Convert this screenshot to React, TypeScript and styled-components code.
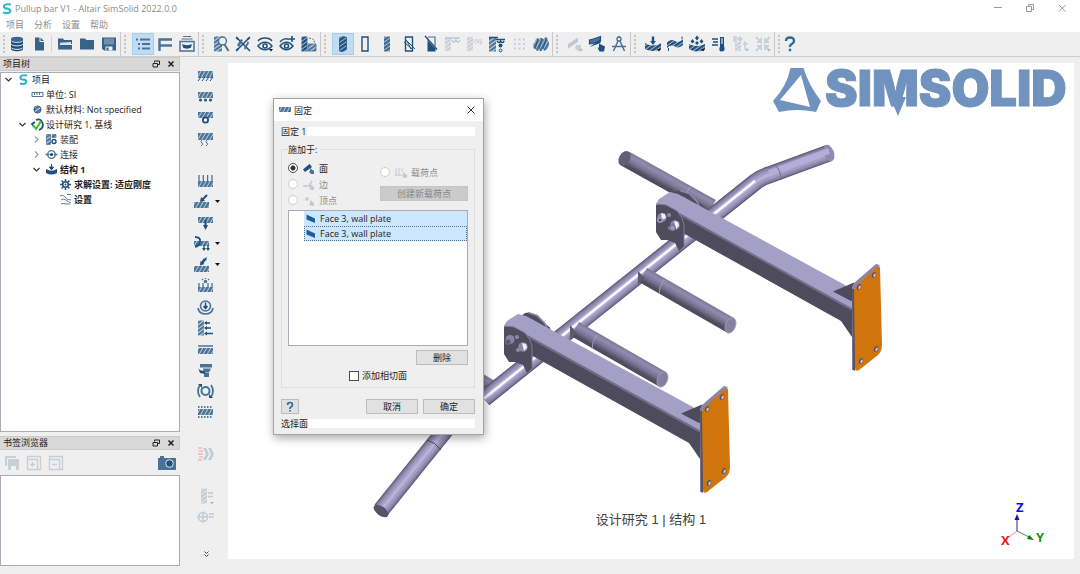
import React from "react";
import styled, { createGlobalStyle, css } from "styled-components";

const navy = "#1f4f7d";
const steel = "#4a7297";
const chrome = "#efefef";

const Global = createGlobalStyle`
  * { box-sizing: border-box; }
  body {
    margin: 0;
    background: ${chrome};
    color: #1c1c1c;
    font: 9px/15px "Open Sans", "Noto Sans CJK SC", sans-serif;
  }
  button, input, ul { font: inherit; color: inherit; margin: 0; padding: 0; }
  svg { display: block; flex: none; }
`;

const Page = styled.div`
  display: flex;
  flex-direction: column;
  min-height: 100vh;
`;

const TitleBar = styled.header`
  display: flex;
  align-items: center;
  gap: 3px;
  height: 16px;
  padding: 0 12px 0 2px;
  background: #fff;
  color: #8c8c8c;
`;

const TitleText = styled.h1`
  flex: 1;
  margin: 0;
  font-size: 9px;
  font-weight: 400;
`;

const WindowButtons = styled.div`
  display: flex;
  gap: 20px;
`;

const BareButton = styled.button`
  display: grid;
  place-items: center;
  border: 0;
  background: none;
`;

const WindowButton = styled(BareButton)`
  width: 12px;
  height: 12px;
`;

const MenuBar = styled.nav`
  display: flex;
  gap: 10px;
  height: 16px;
  padding-left: 6px;
  background: #fff;
  color: #8c8c8c;
`;

const MenuItem = styled(BareButton)`
  height: 16px;
`;

const ToolBar = styled.div`
  display: flex;
  height: 25px;
  background: ${chrome};
  border-bottom: 1px solid #cdcdcd;
`;

const ToolGroup = styled.div<{ $tight?: boolean; $last?: boolean }>`
  display: flex;
  align-items: center;
  position: relative;
  padding-left: ${(p) => (p.$last ? 4 : p.$tight ? 6 : 11)}px;
  ${(p) => !p.$last && "border-right: 1px solid #c9c9c9;"}
  &::before {
    content: "";
    position: absolute;
    left: 3px;
    top: 3px;
    bottom: 3px;
    border-left: 2px dotted #c4c4c4;
  }
`;

const ToolButton = styled(BareButton)<{ $on?: boolean; $off?: boolean }>`
  width: 22px;
  height: 22px;
  ${(p) => p.$on && css`background: #bedcf3; box-shadow: inset 0 0 0 1px #a5cdec;`}
  svg { opacity: ${(p) => (p.$off ? 0.24 : 1)}; }
`;

const Divider = styled.span`
  width: 1px;
  height: 16px;
  margin: 0 2px 0 1px;
  background: #d2d2d2;
`;

const Body = styled.div`
  display: flex;
  flex: 1;
`;

const Dock = styled.aside`
  display: flex;
  flex-direction: column;
  width: 180px;
  padding-bottom: 8px;
`;

const DockHeader = styled.div`
  display: flex;
  align-items: center;
  gap: 4px;
  height: 14px;
  margin-bottom: 1px;
  padding: 0 3px;
  background: #d8d8d8;
  border: 1px solid #cbcbcb;
  border-left: 0;
`;

const DockTitle = styled.h2`
  flex: 1;
  margin: 0;
  font-size: 9px;
  font-weight: 400;
  line-height: 12px;
`;

const DockButton = styled(BareButton)`
  width: 11px;
  height: 12px;
`;

const Tree = styled.ul`
  flex: 1;
  margin: 0 0 4px;
  list-style: none;
  background: #fff;
  border: 1px solid #a9abb5;
  border-top-width: 0;
  box-shadow: inset 0 1px #a9abb5;
`;

const TreeRow = styled.li<{ $depth: number; $bold?: boolean }>`
  display: flex;
  align-items: center;
  height: 15px;
  padding-left: ${(p) => 2 + p.$depth * 14}px;
  font-weight: ${(p) => (p.$bold ? 700 : 400)};
  white-space: nowrap;
`;

const Twisty = styled.span`
  display: grid;
  place-items: center;
  width: 11px;
`;

const TreeIcon = styled.span`
  display: grid;
  place-items: center;
  width: 18px;
`;

const BookmarkTools = styled.div`
  display: flex;
  align-items: center;
  height: 24px;
  padding: 0 2px 0 1px;
`;

const Spacer = styled.span`
  flex: 1;
`;

const BookmarkList = styled.div`
  height: 91px;
  background: #fff;
  border: 1px solid #a9abb5;
`;

const SideBar = styled.div`
  display: flex;
  flex-direction: column;
  width: 48px;
  padding-top: 8px;
`;

const SideGroup = styled.div`
  display: flex;
  flex-direction: column;
  margin-bottom: 21px;
`;

const SideButton = styled(BareButton)<{ $off?: boolean; $menu?: boolean }>`
  display: flex;
  align-items: center;
  gap: 4px;
  height: 21px;
  padding-left: ${(p) => (p.$menu ? 13 : 16)}px;
  svg { opacity: ${(p) => (p.$off ? 0.28 : 1)}; }
`;

const MoreButton = styled(BareButton)`
  width: 52px;
  height: 12px;
`;

const Viewport = styled.main`
  position: relative;
  flex: 1;
  display: flex;
  min-width: 0;
  margin: 6px 6px 15px 0;
  background: #fff;
`;

const Scene = styled.svg`
  width: 100%;
  height: auto;
  flex: 1;
`;

const Brand = styled.svg`
  position: absolute;
  top: -6px;
  right: 3px;
`;

const Caption = styled.p`
  position: absolute;
  left: 0;
  right: 0;
  bottom: 30px;
  margin: 0;
  text-align: center;
  font: 13px/18px "Liberation Sans", "Noto Sans CJK SC", sans-serif;
  color: #404040;
`;

const Triad = styled.svg`
  position: absolute;
  right: 24px;
  bottom: 8px;
`;

const Dialog = styled.section`
  position: absolute;
  left: 45px;
  top: 35px;
  width: 211px;
  padding-bottom: 6px;
  background: ${chrome};
  border: 1px solid #a3a3a3;
  box-shadow: 1px 3px 9px rgba(0, 0, 0, 0.35);
`;

const DialogHead = styled.div`
  display: flex;
  align-items: center;
  gap: 3px;
  height: 22px;
  padding: 0 6px 0 5px;
  background: #fff;
`;

const DialogTitle = styled.h2`
  flex: 1;
  margin: 0;
  font-size: 9px;
  font-weight: 400;
`;

const DialogBody = styled.form`
  display: flex;
  flex-direction: column;
  padding: 6px 8px 0 7px;
`;

const LineInput = styled.input`
  width: 100%;
  height: 9px;
  border: 0;
  outline: 0;
  background: linear-gradient(to right, ${chrome} 26px, #fff 26px);
`;

const Fieldset = styled.fieldset`
  min-width: 0;
  margin: 6px 0 0;
  padding: 3px 6px 4px;
  border: 1px solid #dedede;
`;

const Legend = styled.legend`
  padding: 0 3px 0 0;
  line-height: 15px;
`;

const Choices = styled.div`
  display: flex;
  justify-content: space-between;
  margin-bottom: 2px;
`;

const ChoiceColumn = styled.div<{ $right?: boolean }>`
  display: flex;
  flex-direction: column;
  gap: ${(p) => (p.$right ? 6 : 0)}px;
  width: ${(p) => (p.$right ? 88 : 80)}px;
  padding-top: ${(p) => (p.$right ? 4 : 0)}px;
`;

const Choice = styled.label<{ $off?: boolean }>`
  display: flex;
  align-items: center;
  gap: 4px;
  height: 16px;
  color: ${(p) => (p.$off ? "#8e8e8e" : "#1c1c1c")};
  svg { opacity: ${(p) => (p.$off ? 0.28 : 1)}; }
`;

const Radio = styled.input`
  appearance: none;
  flex: none;
  width: 10px;
  height: 10px;
  border: 1px solid #4c4c4c;
  border-radius: 50%;
  background: #fff;
  &:checked { background: radial-gradient(#333 0 2px, #fff 3px); }
  &:disabled { border-color: #cfcfcf; }
`;

const Check = styled.input`
  appearance: none;
  flex: none;
  width: 10px;
  height: 10px;
  border: 1px solid #4c4c4c;
  background: #fff;
`;

const PushButton = styled.button<{ $width: number }>`
  display: grid;
  place-items: center;
  width: ${(p) => p.$width}px;
  height: 15px;
  background: #e1e1e1;
  border: 1px solid #bdbdbd;
  line-height: 13px;
  &:disabled { background: #cbcbcb; border-color: #c5c5c5; color: #858585; }
`;

const FaceList = styled.ul`
  height: 136px;
  padding-left: 15px;
  list-style: none;
  background: #fff;
  border: 1px solid #a9abb5;
`;

const FaceItem = styled.li<{ $focus?: boolean }>`
  display: flex;
  align-items: center;
  gap: 5px;
  height: 15px;
  padding-left: 2px;
  background: #cce6fd;
  outline: ${(p) => (p.$focus ? "1px dotted #4b6e8c" : "0")};
  outline-offset: -1px;
`;

const ButtonRow = styled.div`
  display: flex;
  gap: 5px;
  margin-top: 4px;
`;

const DialogFooter = styled(ButtonRow)`
  margin: 11px 0 5px;
`;

const TangentRow = styled.label`
  display: flex;
  align-items: center;
  justify-content: center;
  gap: 3px;
  height: 15px;
  margin-top: 3px;
`;

/* ---------- icons ---------- */

const PatternSheet = styled.svg`
  position: absolute;
`;

function Patterns() {
  return (
    <PatternSheet width="0" height="0" aria-hidden="true">
      <defs>
        <pattern id="hatch" width="4" height="4" patternUnits="userSpaceOnUse" patternTransform="skewX(-30)">
          <rect width="4" height="4" fill="#b9c8d6" />
          <rect width="2.8" height="4" fill={steel} />
        </pattern>
        <pattern id="hatchDark" width="5" height="4" patternUnits="userSpaceOnUse" patternTransform="skewY(-35)">
          <rect width="5" height="4" fill="#a9bccd" />
          <rect width="5" height="2.8" fill={navy} />
        </pattern>
        <pattern id="hatchV" width="5" height="4" patternUnits="userSpaceOnUse" patternTransform="skewY(-35)">
          <rect width="5" height="4" fill="#c9d5df" />
          <rect width="5" height="2.6" fill={steel} />
        </pattern>
      </defs>
    </PatternSheet>
  );
}

const H = "url(#hatch)";
const HD = "url(#hatchDark)";
const HV = "url(#hatchV)";

function Icon({ children, w = 18, h = 18 }: { children: React.ReactNode; w?: number; h?: number }) {
  return (
    <svg width={w} height={h} viewBox={`0 0 ${w} ${h}`} fill="none" stroke="none" aria-hidden="true">
      {children}
    </svg>
  );
}

const caret = <path d="M13 14h4l-2 2.400z" fill="#111" />;

const art: Record<string, React.ReactNode> = {
  database: (
    <>
      <path d="M3 4v10c0 3 12 3 12 0V4z" fill={navy} />
      <ellipse cx="9" cy="4" rx="6" ry="2.3" fill="#386892" />
      <path d="M3 5.500c1 2.500 11 2.500 12 0M3 9c1 2.500 11 2.500 12 0M3 12.500c1 2.500 11 2.500 12 0" stroke="#dfe7ee" />
    </>
  ),
  file: (
    <>
      <path d="M5 2.500h4.500V7H14v8.500H5z" fill="#376389" />
      <path d="M10.500 2.500 14 6h-3.500z" fill="#376389" />
    </>
  ),
  folderOpen: (
    <>
      <path d="M2 14.500V3.500h5l1 1.500h8v4h-1V7L5 8.500z" fill="#376389" />
      <path d="M4.500 7.500h10l1.500 7H2z" fill="#d7e1e9" />
      <path d="M3.500 10h12.500v4.500H2z" fill="#376389" />
    </>
  ),
  folder: <path d="M2 14.500V3.500h5L8.500 5H16v9.500z" fill="#376389" />,
  save: (
    <>
      <path d="M2 2.500h14v13H4l-2-2z" fill="#376389" />
      <path d="M4 3.500h10v6H4z" fill="#6f90ae" />
      <path d="M5.500 11.500h7v4h-7z" fill="#e8eef3" />
      <path d="M6.500 12.500h2v3h-2z" fill="#376389" />
    </>
  ),
  list: (
    <path d="M2 4.500h2M6 4.500h10M4 9h2M8 9h8M4 13.500h2M8 13.500h8" stroke={steel} strokeWidth="2" />
  ),
  indent: (
    <>
      <path d="M3.500 16V4.500H16" stroke={steel} strokeWidth="2.400" />
      <path d="M4 10.500h12" stroke={steel} strokeWidth="2.400" />
    </>
  ),
  stack: (
    <>
      <path d="M5 1.500h8M3.500 4h11" stroke={steel} />
      <path d="M2 6.500h14v9.500H2z" stroke={steel} strokeWidth="1.500" />
      <path d="M4 9c2 1.500 8 1.500 10 0l-1 3.500c-2 1.500-6 1.500-8 0z" fill={navy} />
    </>
  ),
  search: (
    <>
      <path d="M2 1.500h8v15H2z" fill={HV} />
      <circle cx="10.500" cy="6" r="4" fill="#e9eef2" stroke={steel} strokeWidth="1.400" />
      <path d="m12.500 9.500 4 6.500" stroke={steel} strokeWidth="2" />
    </>
  ),
  cross: (
    <>
      <path d="m2 2 14 14M16 2 2 16" stroke={navy} strokeWidth="1.500" />
      <path d="m3 10 4-6 2 1-4 7zM10 13l4-7 1 2-4 7z" fill={steel} />
      <path d="m2 2 3 1-2 2zM16 2l-3 1 2 2zM2 16l3-1-2-2z" fill={navy} />
    </>
  ),
  eye: (
    <>
      <path d="M2 6c3-4 11-4 14 0M2 11c4-5 10-5 14 0-4 5-10 5-14 0z" stroke={navy} strokeWidth="1.400" />
      <circle cx="9" cy="11" r="2" stroke={navy} strokeWidth="1.600" />
      {caret}
    </>
  ),
  eyePlus: (
    <>
      <path d="M2 7c2-3 6-4 9-2.500M2 11c4-5 9-5 13 0-4 5-9 5-13 0z" stroke={navy} strokeWidth="1.400" />
      <circle cx="8.500" cy="11" r="2" stroke={navy} strokeWidth="1.600" />
      <path d="M14 1v6M11 4h6" stroke={navy} strokeWidth="1.600" />
    </>
  ),
  swap: (
    <>
      <path d="M1.500 1.500h6v15h-6z" fill={HD} />
      <path d="M8 9h8v7H8z" fill={HV} stroke={steel} strokeWidth=".8" />
      <path d="M9 3.500c3-1 5 1 5.500 4" stroke={steel} strokeDasharray="2 1" />
    </>
  ),
  solid: <path d="M5.500 3q3.500-2.500 7-.5v12q-3.500 3-7 1.500z" fill={HD} stroke={navy} strokeWidth=".7" />,
  outline: <path d="M6 2h6v14H6z" stroke={navy} strokeWidth="1.400" />,
  translucent: <path d="M6 1.500h6v15H6z" fill={HD} opacity=".85" />,
  hideOutline: (
    <>
      <path d="M5.500 2h7v14h-7z" stroke={navy} strokeWidth="1.400" />
      <path d="m5 4 10 10M4 7l9 8M7 6l4 8" stroke={navy} />
    </>
  ),
  hideSolid: (
    <>
      <path d="M5.500 5v11.500h8V14z" fill={navy} />
      <path d="M6 2h7v9" stroke={steel} strokeWidth="1.200" />
      <path d="m3 1 12 13.500" stroke={navy} strokeWidth="1.400" />
    </>
  ),
  maskA: (
    <>
      <path d="M1 2h6v14H1z" fill={HV} />
      <path d="M1 3h15M8 5c1 3 3 3 4 0 1 3 3 3 4 0" stroke={navy} strokeWidth="1.400" />
    </>
  ),
  maskB: (
    <>
      <path d="M1 2h6v14H1z" fill={HV} />
      <path d="M8 5h8M8 6c1 3 3 3 4 0 1 3 3 3 4 0M15 6v4" stroke={steel} />
    </>
  ),
  maskC: (
    <>
      <path d="M1 2h7v14.500H1z" fill={HV} />
      <path d="M1 2.500h9M8 4.500h9M9 6c1 2 3 2 3.500 0 1 2 3 2 3.500 0" stroke={navy} strokeWidth="1.500" />
      <circle cx="12.500" cy="10.500" r="2" fill={navy} />
      <circle cx="12.500" cy="15.500" r="1.400" stroke={navy} />
    </>
  ),
  dots: (
    <path d="M4 4.500h11M4 9h11M4 13.500h11" stroke={steel} strokeWidth="2" strokeDasharray="2 2.500" />
  ),
  waves: (
    <>
      <path d="M1 9q2-1 3-5 2-2 3 1 1-3 3-2 1 2 2 1 2-4 3-1l2 5q0 5-3 7-2 2-3-1-2 4-4 1-2 3-3-1-3 1-3-5z" fill={H} />
      <path d="m3 14 3-11M7 14l3-11M11 14l3-11" stroke={navy} strokeWidth=".8" />
    </>
  ),
  pickFace: (
    <>
      <path d="M2 9 12 2.500V7L2 13.500z" fill={navy} />
      <path d="M10 10h5v5l-2 1.500-4-3z" fill={steel} />
      {caret}
    </>
  ),
  pickRect: (
    <>
      <path d="M1.500 5q5-1 11-3.500V6q-5 2-11 3z" fill={steel} stroke={navy} strokeWidth="1.200" />
      <path d="M1.500 12 12.500 4v4z" fill={navy} />
      <path d="M11 8.500v4H9.500l2 4H16l1-5z" fill={navy} />
    </>
  ),
  compass: (
    <>
      <circle cx="9" cy="4" r="2" stroke={steel} strokeWidth="1.400" />
      <path d="M8 6 3.500 16M10 6l4.500 10M2 11.500h14M9 1v2" stroke={steel} strokeWidth="1.500" />
    </>
  ),
  load: (
    <>
      <path d="M1 8q8 5 16 0v6q-8 4-16 0z" fill={HD} />
      <path d="M9 1.500v5" stroke={navy} strokeWidth="2.400" />
      <path d="M6 6h6l-3 4z" fill={navy} />
      {caret}
    </>
  ),
  modal: (
    <>
      <path d="M1 7.500q4-4 8-1.500t8-2v6q-4 4-8 1.500T1 13z" fill={HD} />
      <path d="M2.500 13v3M16 1.500V4" stroke={navy} />
    </>
  ),
  freq: (
    <>
      <path d="M1 9q8 4 16 0v5q-8 5-16 0z" fill={HD} />
      <path d="M9 .5 11 3 9 5.500 7 3zM4.500 4 6.500 6.500l-2 2-2-2zM13.500 4l2 2.500-2 2-2-2zM9 6l2 2-2 2-2-2z" fill={navy} />
      {caret}
    </>
  ),
  thermo: (
    <>
      <path d="M2 4h6M3 7h5M2 10h6" stroke={navy} strokeWidth="1.300" />
      <path d="M10 2h4v9q2 5-2 5.500T10 11z" fill={navy} />
      <path d="M12 3v6" stroke="#fff" />
    </>
  ),
  transient: (
    <>
      <path d="M3 7h6v9H3z" fill={HV} />
      <path d="m8 1 3 3-3 3-3-3z" fill={steel} />
      <path d="M13 6v8h3M11 9h5M1 2h3v2H2v2h3" stroke={steel} strokeWidth="1.500" />
      {caret}
    </>
  ),
  inward: (
    <>
      <path d="M2 2l5 5V3M7 7H3M16 2l-5 5V3M11 7h4M2 16l5-5v4M7 11H3M16 16l-5-5v4M11 11h4" stroke={steel} strokeWidth="1.800" />
      {caret}
    </>
  ),
  help: (
    <path
      d="M5 6q0-3.500 4-3.500T13 6q0 1.800-2.200 3T9 12M9 13.700v2.500"
      stroke="#336a93"
      strokeWidth="2.400"
    />
  ),
};

const sideArt: Record<string, React.ReactNode> = {
  fixed: (
    <>
      <path d="M2 4h15v7H2z" fill={H} />
      <path d="m2 14 3-4M6 14l3-4M10 14l3-4M14 14l3-4" stroke={navy} />
    </>
  ),
  slider: (
    <>
      <path d="M2 4h15v6H2z" fill={H} />
      <circle cx="4.500" cy="12" r="1.500" fill={navy} />
      <circle cx="9.500" cy="12" r="1.500" fill={navy} />
      <circle cx="14.500" cy="12" r="1.500" fill={navy} />
    </>
  ),
  hinge: (
    <>
      <path d="M2 3h15v6H2z" fill={H} />
      <circle cx="9.500" cy="11" r="2.600" fill="#fff" stroke={navy} strokeWidth="1.800" />
    </>
  ),
  elastic: (
    <>
      <path d="M2 3h15v7H2z" fill={H} />
      <path d="M6 10q-2 2 0 3t-1 3M11 10q-2 2 0 3t-1 3" stroke={steel} />
    </>
  ),
  pressure: (
    <>
      <path d="M2 9h15v6H2z" fill={H} />
      <path d="M3 3v6M7.300 3v6M11.600 3v6M16 3v6" stroke={steel} strokeWidth="1.300" />
    </>
  ),
  force: (
    <>
      <path d="M1 9h15v6H1z" fill={H} />
      <path d="m14 2-5 5" stroke={navy} strokeWidth="2" />
      <path d="m7 9 1-5 4 4z" fill={navy} />
    </>
  ),
  gravity: (
    <>
      <path d="M2 3h15v6H2z" fill={H} />
      <path d="M9.500 6v6" stroke={navy} strokeWidth="2" />
      <path d="M7 11h5l-2.500 5z" fill={navy} />
    </>
  ),
  moment: (
    <>
      <path d="M1 6h15v5H1z" fill={H} />
      <path d="M2 2q6 0 5 5-1 4-5 5" stroke={navy} strokeWidth="1.800" />
      <path d="M11 10v5M15 10v5" stroke={navy} strokeWidth="1.300" />
      <path d="M9 13h4l-2 3zM13 13h4l-2 3z" fill={navy} />
    </>
  ),
  remote: (
    <>
      <path d="M1 10h15v6H1z" fill={H} />
      <path d="M12 3 9 7" stroke={navy} strokeWidth="2.600" />
      <path d="M7 9.500 7.500 5l4 3zM14 1l-1 4-2-2z" fill={navy} />
    </>
  ),
  thermalLoad: (
    <>
      <path d="M2 10h15v5H2z" fill={H} />
      <path d="M3 6v4M7 6v4M12 6v4M16 6v4M6 2l1 1M13 2l-1 1M9.500 1v1" stroke={steel} strokeWidth="1.300" />
      <circle cx="9.500" cy="4.500" r="1.700" fill={steel} />
    </>
  ),
  rotate: (
    <>
      <circle cx="9.500" cy="8" r="5" stroke={steel} strokeWidth="1.600" />
      <path d="M9.500 4.500v5M7.500 8l2 2.500 2-2.500" stroke={navy} strokeWidth="1.500" />
      <path d="M2 10q1 6 7.500 6T17 10" stroke={steel} strokeWidth="1.700" />
    </>
  ),
  hydro: (
    <>
      <path d="M2 1.500h6v15H2z" fill={HV} />
      <path d="M9 4h5M9 9h6M9 14.500h8" stroke={navy} strokeWidth="1.500" />
      <path d="m11 2-3 2 3 2zM11 7 8 9l3 2zM11 12.500l-3 2 3 2z" fill={navy} />
    </>
  ),
  plate: (
    <>
      <path d="M2 8h15v6H2z" fill={H} />
      <path d="M2 6h15" stroke={steel} strokeWidth="1.500" />
    </>
  ),
  bolt: (
    <>
      <path d="M4 3h12v3.500H4zM8 12h5v4H8z" fill={steel} />
      <path d="M7 7.500h8l-2 4H8z" fill={steel} />
      <path d="M2 6.500q2 4 6 3l2 3.500-6-1z" fill={navy} />
    </>
  ),
  inertia: (
    <>
      <circle cx="9.500" cy="9" r="4" stroke={steel} strokeWidth="2" />
      <path d="M4 3q-4 6 0 12M15 3q4 6 0 12" stroke={steel} strokeWidth="1.800" />
      <path d="M2 2h4v4zM17 16h-4v-4z" fill={navy} />
    </>
  ),
  shrink: (
    <>
      <path d="M2 6h15v6H2z" fill={H} />
      <path d="M2 4h15M2 14h15" stroke={navy} strokeWidth="1.500" strokeDasharray="1.500 1.500" />
    </>
  ),
  flow: (
    <>
      <path d="M2 3h4M3 6h4M2 9h5M3 12h4M2 15h4" stroke="#f02535" strokeWidth="1.400" />
      <path d="M7 3h3l3 6-3 6H7l3-6zM12 3h3l3 6-3 6h-3l3-6z" fill={steel} />
    </>
  ),
  column: (
    <>
      <path d="M5 1.500h6v15H5z" fill={HV} />
      <path d="M12 6h5M12 9.500h5" stroke={steel} strokeWidth="1.600" />
      <path d="M14 15h4l-2 2z" fill="#000" />
    </>
  ),
  globe: (
    <>
      <circle cx="7" cy="9" r="4.500" stroke={steel} strokeWidth="1.500" />
      <path d="M1.500 9h11M7 3.500v11" stroke={steel} strokeWidth="1.500" />
      <path d="M13 6h5M13 9h5" stroke={steel} strokeWidth="1.600" />
    </>
  ),
};

const treeArt: Record<string, React.ReactNode> = {
  app: (
    <path
      d="M10 2.500Q4 1.500 3.500 4.200T7 6.700q3 .5 2 2.800T3 10.500"
      stroke="#35b5cb"
      strokeWidth="2.200"
    />
  ),
  ruler: <path d="M1 4.500h11v4H1zM3.500 5v2M6 5v2M8.500 5v2" stroke="#4f7396" />,
  ball: <circle cx="6.500" cy="6.500" r="3.600" fill={HV} stroke={navy} strokeWidth=".8" />,
  study: (
    <>
      <path d="M5 2q5-2 6.500 3T8 12M4 4 1 6l2 3" stroke={navy} strokeWidth="1.800" />
      <path d="m2 7 3 4 5-8" stroke="#35c928" strokeWidth="2" />
    </>
  ),
  assembly: (
    <>
      <path d="M1.500 1.500h4v10h-4zM7 1.500h4v3H7z" fill={HV} stroke={navy} strokeWidth=".5" />
      <circle cx="9" cy="8.500" r="2" stroke={navy} strokeWidth="1.400" />
    </>
  ),
  connect: (
    <>
      <circle cx="6.500" cy="6.500" r="3.800" stroke={steel} strokeWidth="1.300" />
      <circle cx="6.500" cy="6.500" r="1.600" fill={navy} />
      <path d="M.5 6.500h4M9 6.500h3.500" stroke={steel} strokeWidth="1.300" />
    </>
  ),
  structure: (
    <>
      <path d="M1 6q5.500 3.500 11 0v4q-5.500 3-11 0z" fill={navy} />
      <path d="M6.500 1v4M4.500 4l2 3 2-3z" stroke={navy} fill={navy} />
    </>
  ),
  gear: (
    <>
      <circle cx="6.500" cy="6.500" r="2.800" stroke={navy} strokeWidth="1.600" />
      <circle cx="6.500" cy="6.500" r="1" fill={navy} />
      <path d="M6.500 1v2M6.500 10v2M1 6.500h2M10 6.500h2M2.600 2.600 4 4M9 9l1.400 1.400M10.400 2.600 9 4M4 9l-1.400 1.400" stroke={navy} strokeWidth="1.500" />
    </>
  ),
  curves: <path d="M1 3q3-2 5 1t6 3M2 7q2-2 5 0t5 3M2 11q3-1 5 0h4M8 1.500h4" stroke="#5f7d9a" />,
};

const mini: Record<string, React.ReactNode> = {
  face: (
    <>
      <path d="M1 7.500 7.500 2 10 5 3 10z" fill={navy} />
      <path d="M8 6v3l-1 1 2 2h3V9z" fill={steel} />
    </>
  ),
  edge: (
    <>
      <path d="M1 8h6l3-5" stroke={steel} strokeWidth="1.500" />
      <path d="M8 6v3l-1 1 2 2h3V9z" fill={steel} />
    </>
  ),
  vertex: (
    <>
      <circle cx="5" cy="5" r="1.800" fill={steel} />
      <path d="M8 6v3l-1 1 2 2h3V9z" fill={steel} />
    </>
  ),
  point: (
    <>
      <path d="M2 2v8M5 2v8M8 2v4M1 9h7" stroke={steel} />
      <path d="M9 6v3l-1 1 2 2h3V9z" fill={steel} />
    </>
  ),
};

/* ---------- 3D model ---------- */

const tones: [string, number][] = [
  ["#5d5975", 17],
  ["#7b7798", 15],
  ["#918cb0", 12],
  ["#a39ec3", 8],
];

function Tube({ d, shine = "#b7b2d8", glow = 3 }: { d: string; shine?: string; glow?: number }) {
  return (
    <g fill="none" strokeLinejoin="round">
      {tones.map(([color, width]) => (
        <path key={width} d={d} stroke={color} strokeWidth={width} />
      ))}
      <path d={d} stroke={shine} strokeWidth={glow} />
    </g>
  );
}

/* Handles run away from the light, so they are lit on the upper edge only. */
function Handle({ d, id }: { d: [number, number, number, number]; id: string }) {
  const [x1, y1, x2, y2] = d;
  const len = Math.hypot(x2 - x1, y2 - y1);
  const nx = (-(y2 - y1) / len) * 8;
  const ny = ((x2 - x1) / len) * 8;
  return (
    <g>
      <linearGradient id={id} gradientUnits="userSpaceOnUse" x1={x1 - nx} y1={y1 - ny} x2={x1 + nx} y2={y1 + ny}>
        <stop offset="0" stopColor="#7d7999" />
        <stop offset=".25" stopColor="#918cad" />
        <stop offset=".55" stopColor="#787391" />
        <stop offset=".8" stopColor="#535063" />
        <stop offset="1" stopColor="#4b4859" />
      </linearGradient>
      <path
        d={`M${x1 - nx} ${y1 - ny}L${x2 - nx} ${y2 - ny}L${x2 + nx} ${y2 + ny}L${x1 + nx} ${y1 + ny}z`}
        fill={`url(#${id})`}
      />
    </g>
  );
}

function Arm({ x = 0, y = 0, bright }: { x?: number; y?: number; bright?: boolean }) {
  return (
    <g transform={`translate(${x} ${y})`}>
      <path d="M521 316l4-3 4-.5 9 3 7 8 5 4 1 6-4 4-8-2z" fill="#4f4c5e" />
      <path d="M528 312.500l9 3 8 8 4 9" stroke="#918cad" strokeWidth="1.500" fill="none" />
      <path d="M532 320l3 3" stroke="#fff" strokeWidth="1.500" />
      <path d="M504 326l3-5 11-7 8 2 167 91 8 8v25L526 345z" fill="#a49fc4" />
      <path d="M526 336l174 96v27l-11-16-158-88-5-6z" fill="#4e4b5c" />
      <path d="M526 335.500l174 96" stroke="#716d88" strokeWidth="2" />
      <path d="M681 413.500l21-9v19l-4-1z" fill="#4e4b5c" />
      <path d="M504 327l4-1 6 1 11 6 5 7 2 6v22l-5 5-4-8-8-3-6 0-5-8z" fill="#4f4c5e" />
      <path d="M504 326l10 1 11 6 5 7 2 6v21" stroke="#7d7999" fill="none" />
      <circle cx="510" cy="339.500" r="4.500" fill="#8a85a6" />
      {bright && <path d="M509 335l4 1 1 4-4 2z" fill="#f1effa" />}
      <circle cx="508" cy="342" r="3" fill={bright ? "#9d98bc" : "#6b6782"} />
      <circle cx="508" cy="342" r="1.300" fill="#4f4c5e" />
      <circle cx="517" cy="337" r="2" fill="#8f8aae" />
      <circle cx="518" cy="350" r="2" fill="#8f8aae" />
      <circle cx="523" cy="347" r="4.800" fill="#8a85a6" />
      <path d="M522 343l4 1 1 4-3 3z" fill="#f1effa" />
      {bright && <circle cx="520.500" cy="350" r="3" fill="#9d98bc" stroke="#5f5b74" strokeWidth=".8" />}
      <path d="M700 409l2-4 22-19 4 1-26 24v81h-2z" fill="#8a86a6" />
      <path d="M700 411h3v82l-2-1z" fill="#55526a" />
      <path d="M702 412q0-3 3-5l20-18q3-2 3 1l2 77q0 6-4 10l-19 15q-4 2-4-2z" fill="#d0740c" />
      {[
        [707, 409],
        [722, 397],
        [724, 471],
        [709, 483],
      ].map(([cx, cy]) => (
        <g key={cx} transform={`rotate(25 ${cx} ${cy})`}>
          <ellipse cx={cx} cy={cy} rx="2" ry="3" fill="#55526a" />
          <ellipse cx={cx + 0.6} cy={cy} rx=".9" ry="2" fill="#cfd3e6" />
        </g>
      ))}
    </g>
  );
}

function Model() {
  return (
    <Scene viewBox="228 63 846 496" preserveAspectRatio="xMidYMid meet" role="img" aria-label="Pullup bar">
      <Handle id="gripA" d={[625, 158.500, 712, 207]} />
      <ellipse cx="624.500" cy="158.500" rx="5.500" ry="8" fill="#625e77" transform="rotate(28 624.500 158.500)" />
      <path d="M690 187q-4 5-5 11" stroke="#a39ec3" fill="none" />
      <Handle id="gripB" d={[474, 378, 496, 391]} />
      <Tube d="M484 398.500 756 181.500Q762 177 769 175L829 153" />
      <ellipse cx="829" cy="153" rx="5" ry="8.500" fill="#8f8ab0" transform="rotate(-20 829 153)" />
      <path d="M829 151 769 173" stroke="#b2addb" strokeWidth="6" />
      <path d="M776 166q5 5 5 14" stroke="#716d88" fill="none" />
      <path d="M484 398.500 755 181" stroke="#cbc6e6" strokeWidth="4" />
      <path d="M484 398.500 755 181" stroke="#fff" strokeWidth="1.800" />
      <Handle id="gripC" d={[643, 275, 730, 325]} />
      <path d="M638 271v13l7-6z" fill="#5d5a70" />
      <ellipse cx="730.500" cy="325.500" rx="5" ry="8" fill="#85809f" stroke="#a39ec3" strokeWidth=".8" transform="rotate(22 730.500 325.500)" />
      <path d="M664 280q-5 6-5 14" stroke="#a39ec3" fill="none" />
      <Handle id="gripD" d={[575, 329, 662, 379]} />
      <path d="M570 325v14l7-6z" fill="#5d5a70" />
      <ellipse cx="662.500" cy="379.500" rx="5" ry="8" fill="#85809f" stroke="#a39ec3" strokeWidth=".8" transform="rotate(22 662.500 379.500)" />
      <path d="M597 335q-5 6-5 14" stroke="#a39ec3" fill="none" />
      <Tube d="M460 412 381 510" />
      <ellipse cx="381" cy="511" rx="8.500" ry="4.500" fill="#55526a" transform="rotate(36 381 511)" />
      <path d="M427 440q8 2 14 10" stroke="#4b4859" fill="none" />
      <Arm x={152} y={-122} bright />
      <Arm />
    </Scene>
  );
}

/* ---------- page ---------- */

type Tool = { icon: string; label: string; on?: boolean; off?: boolean; split?: boolean };

const toolGroups: Tool[][] = [
  [
    { icon: "database", label: "数据库" },
    { icon: "file", label: "新建", split: true },
    { icon: "folderOpen", label: "打开" },
    { icon: "folder", label: "导入" },
    { icon: "save", label: "保存" },
  ],
  [
    { icon: "list", label: "项目树", on: true },
    { icon: "indent", label: "书签" },
    { icon: "stack", label: "窗口" },
  ],
  [
    { icon: "search", label: "查找" },
    { icon: "cross", label: "隔离" },
    { icon: "eye", label: "可见性" },
    { icon: "eyePlus", label: "显示" },
    { icon: "swap", label: "反转" },
  ],
  [
    { icon: "solid", label: "实体", on: true },
    { icon: "outline", label: "线框" },
    { icon: "translucent", label: "半透明" },
    { icon: "hideOutline", label: "隐藏边" },
    { icon: "hideSolid", label: "隐藏面" },
    { icon: "maskA", label: "遮罩", off: true },
    { icon: "maskB", label: "遮罩边", off: true },
    { icon: "maskC", label: "约束符号" },
    { icon: "dots", label: "点", off: true },
    { icon: "waves", label: "变形" },
  ],
  [
    { icon: "pickFace", label: "选取面", off: true },
    { icon: "pickRect", label: "框选" },
    { icon: "compass", label: "测量" },
  ],
  [
    { icon: "load", label: "结构" },
    { icon: "modal", label: "模态" },
    { icon: "freq", label: "动力学" },
    { icon: "thermo", label: "热" },
    { icon: "transient", label: "瞬态", off: true },
    { icon: "inward", label: "疲劳", off: true },
  ],
  [{ icon: "help", label: "帮助" }],
];

const sideGroups: { icon: string; menu?: boolean; off?: boolean }[][] = [
  [{ icon: "fixed" }, { icon: "slider" }, { icon: "hinge" }, { icon: "elastic" }],
  [
    { icon: "pressure" },
    { icon: "force", menu: true },
    { icon: "gravity" },
    { icon: "moment", menu: true },
    { icon: "remote", menu: true },
    { icon: "thermalLoad" },
    { icon: "rotate" },
    { icon: "hydro" },
    { icon: "plate" },
    { icon: "bolt" },
    { icon: "inertia" },
    { icon: "shrink" },
  ],
  [{ icon: "flow", off: true }],
  [
    { icon: "column", off: true },
    { icon: "globe", off: true },
  ],
];

const treeRows: { depth: number; icon: string; text: string; open?: boolean; bold?: boolean }[] = [
  { depth: 0, icon: "app", text: "项目", open: true },
  { depth: 1, icon: "ruler", text: "单位: SI" },
  { depth: 1, icon: "ball", text: "默认材料: Not specified" },
  { depth: 1, icon: "study", text: "设计研究 1, 基线", open: true },
  { depth: 2, icon: "assembly", text: "装配", open: false },
  { depth: 2, icon: "connect", text: "连接", open: false },
  { depth: 2, icon: "structure", text: "结构 1", open: true, bold: true },
  { depth: 3, icon: "gear", text: "求解设置: 适应刚度", bold: true },
  { depth: 3, icon: "curves", text: "设置", bold: true },
];

function DockHead({ title }: { title: string }) {
  return (
    <DockHeader>
      <DockTitle>{title}</DockTitle>
      <DockButton aria-label="浮动">
        <Icon w={8} h={8}>
          <path d="M2.500 2.500V1h5v3.500H6M1 3.500h4.500v3.500H1z" stroke="#222" />
        </Icon>
      </DockButton>
      <DockButton aria-label="关闭">
        <Icon w={8} h={8}>
          <path d="m1.500 1.500 5 5M6.500 1.500l-5 5" stroke="#222" strokeWidth="1.500" />
        </Icon>
      </DockButton>
    </DockHeader>
  );
}

function FixDialog() {
  return (
    <Dialog role="dialog" aria-label="固定">
      <DialogHead>
        <Icon w={12} h={8}>
          <path d="M0 1h12v5H0z" fill={H} />
        </Icon>
        <DialogTitle>固定</DialogTitle>
        <WindowButton aria-label="关闭">
          <Icon w={10} h={10}>
            <path d="m1.500 1.500 7 7M8.500 1.500l-7 7" stroke="#333" />
          </Icon>
        </WindowButton>
      </DialogHead>
      <DialogBody onSubmit={(e) => e.preventDefault()}>
        <LineInput aria-label="名称" defaultValue="固定 1" />
        <Fieldset>
          <Legend>施加于:</Legend>
          <Choices>
            <ChoiceColumn>
              <Choice>
                <Radio type="radio" name="target" defaultChecked />
                <Icon w={13} h={13}>{mini.face}</Icon>面
              </Choice>
              <Choice $off>
                <Radio type="radio" name="target" disabled />
                <Icon w={13} h={13}>{mini.edge}</Icon>边
              </Choice>
              <Choice $off>
                <Radio type="radio" name="target" disabled />
                <Icon w={13} h={13}>{mini.vertex}</Icon>顶点
              </Choice>
            </ChoiceColumn>
            <ChoiceColumn $right>
              <Choice $off>
                <Radio type="radio" name="target" disabled />
                <Icon w={13} h={13}>{mini.point}</Icon>载荷点
              </Choice>
              <PushButton type="button" $width={88} disabled>
                创建新载荷点
              </PushButton>
            </ChoiceColumn>
          </Choices>
          <FaceList>
            {[false, true].map((focus) => (
              <FaceItem key={String(focus)} $focus={focus}>
                <Icon w={9} h={9}>
                  <path d="M.5.5 9 4.500V9L.5 5.500z" fill="#1d5f9e" />
                </Icon>
                Face 3, wall plate
              </FaceItem>
            ))}
          </FaceList>
          <ButtonRow>
            <Spacer />
            <PushButton type="button" $width={52}>删除</PushButton>
          </ButtonRow>
          <TangentRow>
            <Check type="checkbox" />
            添加相切面
          </TangentRow>
        </Fieldset>
        <DialogFooter>
          <PushButton type="button" $width={18} aria-label="帮助">
            <Icon w={12} h={12}>
              <path d="M3.500 4q0-2.500 2.500-2.500T8.500 4q0 1-1.300 1.800T6 8M6 9v1.600" stroke="#336a93" strokeWidth="1.700" />
            </Icon>
          </PushButton>
          <Spacer />
          <PushButton type="button" $width={52}>取消</PushButton>
          <PushButton type="submit" $width={52}>确定</PushButton>
        </DialogFooter>
        <LineInput aria-label="提示" readOnly value="选择面" />
      </DialogBody>
    </Dialog>
  );
}

export default function App() {
  return (
    <Page>
      <Global />
      <Patterns />
      <TitleBar>
        <Icon w={10} h={13}>
          <path d="M9 2.500Q2.500 1.500 2 4t3.500 2.700Q9 7.500 8 9.700t-7 .8" stroke="#35b5cb" strokeWidth="2.200" />
        </Icon>
        <TitleText>Pullup bar V1 - Altair SimSolid 2022.0.0</TitleText>
        <WindowButtons>
          <WindowButton aria-label="最小化">
            <Icon w={8} h={8}><path d="M0 3.500h8" stroke="#999" /></Icon>
          </WindowButton>
          <WindowButton aria-label="还原">
            <Icon w={8} h={8}><path d="M.5 2.500h5v5h-5zM2.500 2V.5h5v5H6" stroke="#999" /></Icon>
          </WindowButton>
          <WindowButton aria-label="关闭">
            <Icon w={8} h={8}><path d="m1 1 6.500 6.500M7.500 1 1 7.500" stroke="#999" /></Icon>
          </WindowButton>
        </WindowButtons>
      </TitleBar>
      <MenuBar>
        {["项目", "分析", "设置", "帮助"].map((m) => (
          <MenuItem key={m}>{m}</MenuItem>
        ))}
      </MenuBar>
      <ToolBar role="toolbar">
        {toolGroups.map((group, i) => (
          <ToolGroup key={i} $tight={i === 0} $last={i === 6}>
            {group.map((t) => (
              <React.Fragment key={t.icon}>
                <ToolButton $on={t.on} $off={t.off} disabled={t.off} aria-label={t.label}>
                  <Icon>{art[t.icon]}</Icon>
                </ToolButton>
                {t.split && <Divider />}
              </React.Fragment>
            ))}
          </ToolGroup>
        ))}
      </ToolBar>
      <Body>
        <Dock>
          <DockHead title="项目树" />
          <Tree>
            {treeRows.map((r) => (
              <TreeRow key={r.text} $depth={r.depth} $bold={r.bold}>
                <Twisty>
                  {r.open !== undefined && (
                    <Icon w={7} h={7}>
                      <path d={r.open ? "M.5 2l3 3 3-3" : "M2 .5l3 3-3 3"} stroke={r.open ? "#333" : "#999"} strokeWidth="1.200" />
                    </Icon>
                  )}
                </Twisty>
                <TreeIcon>
                  <Icon w={13} h={13}>{treeArt[r.icon]}</Icon>
                </TreeIcon>
                {r.text}
              </TreeRow>
            ))}
          </Tree>
          <DockHead title="书签浏览器" />
          <BookmarkTools>
            <ToolButton $off disabled aria-label="保存书签">
              <Icon>
                <path d="M2 2h11v2H4v8H2z" fill={steel} />
                <path d="M5 5h11v11H6l-1-1z" fill={steel} />
                <path d="M8 12h5v4H8z" fill="#fff" />
              </Icon>
            </ToolButton>
            <ToolButton $off disabled aria-label="展开">
              <Icon>
                <path d="M2.500 5V2.500h13v13H13M2.500 5.500h10v10h-10zM7.500 8v5M5 10.500h5" stroke={steel} strokeWidth="1.400" />
              </Icon>
            </ToolButton>
            <ToolButton $off disabled aria-label="折叠">
              <Icon>
                <path d="M2.500 5V2.500h13v13H13M2.500 5.500h10v10h-10zM5 10.500h5" stroke={steel} strokeWidth="1.400" />
              </Icon>
            </ToolButton>
            <Spacer />
            <ToolButton aria-label="截图">
              <Icon>
                <path d="M0 4h2V2h4v2h12v12H0z" fill={steel} />
                <circle cx="11.500" cy="9.500" r="3.800" fill={navy} stroke="#dfe8f0" />
              </Icon>
            </ToolButton>
          </BookmarkTools>
          <BookmarkList />
        </Dock>
        <SideBar role="toolbar">
          {sideGroups.map((group, i) => (
            <SideGroup key={i}>
              {group.map((b) => (
                <SideButton key={b.icon} $menu={b.menu} $off={b.off} disabled={b.off} aria-label={b.icon}>
                  <Icon>{sideArt[b.icon]}</Icon>
                  {b.menu && (
                    <Icon w={5} h={3}><path d="M0 0h5L2.500 3z" fill="#111" /></Icon>
                  )}
                </SideButton>
              ))}
            </SideGroup>
          ))}
          <MoreButton aria-label="更多">
            <Icon w={5} h={7}><path d="m.5.5 2 2 2-2M.5 3.500l2 2 2-2" stroke="#444" /></Icon>
          </MoreButton>
        </SideBar>
        <Viewport>
          <Model />
          <Brand width="298" height="68" viewBox="0 -10 298 68" role="img" aria-label="SIMSOLID">
            <path
              fill="#7092be"
              fillRule="evenodd"
              d="M17.500 1h13q5 17 17.500 33L43 45Q24 41 6 45L0 34Q14 19 17.500 1zM28 8 7 33l30 7z"
            />
            <text x="52" y="39" fontFamily="Inter, sans-serif" fontWeight="900" fontSize="49" fill="#7092be" stroke="#7092be" strokeWidth="1">
              SIMSOLID
            </text>
            <path d="M117 30h16l-8 19z" fill="#7092be" />
          </Brand>
          <Caption>设计研究 1 | 结构 1</Caption>
          <Triad width="52" height="52" viewBox="0 0 52 52" role="img" aria-label="XYZ">
            <path d="M19 32V19" stroke="#2222aa" />
            <path d="M16.500 21 19 15l2.500 6z" fill="#16169a" />
            <path d="m19 32 12 6" stroke="#3a9a3a" />
            <path d="m36 41-7-1 2-4z" fill="#0c7a0c" />
            <path d="m19 32-8 6" stroke="#f08080" />
            <g fontFamily="Open Sans, sans-serif" fontWeight="700" fontSize="13">
              <text x="18" y="13" fill="#0a0af0">Z</text>
              <text x="38" y="43" fill="#109a10">Y</text>
              <text x="3" y="46" fill="#f01010">X</text>
            </g>
          </Triad>
          <FixDialog />
        </Viewport>
      </Body>
    </Page>
  );
}
